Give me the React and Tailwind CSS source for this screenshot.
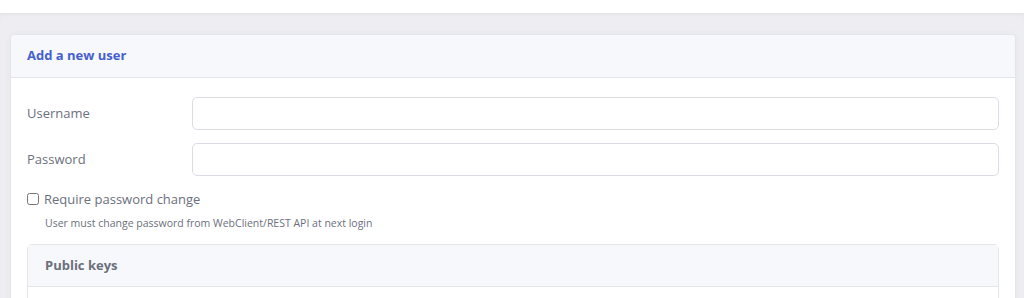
import React from 'react';

function Field({ label, type = 'text' }) {
  return (
    <div className="flex items-center">
      <label className="w-[165px] shrink-0 text-[13px] text-[#6c6f7d]">{label}</label>
      <input
        type={type}
        className="h-[33px] flex-1 rounded-[5px] border border-[#dcdce6] bg-white px-3 text-[13px] outline-none"
      />
    </div>
  );
}

export default function App() {
  return (
    <div className="min-h-screen bg-white font-['Open_Sans',sans-serif]">
      {/* top bar */}
      <div className="h-[13px] bg-white" />

      <main className="bg-[#eeeef2] pl-[10px] pr-[8px] pt-[21px] shadow-[inset_0_3px_4px_-2px_rgba(0,0,0,0.06)]">
        <section className="rounded-t-[5px] border border-b-0 border-[#e4e5ec] bg-white shadow-[0_0_6px_rgba(0,0,0,0.04)]">
          <header className="flex h-[43px] items-center rounded-t-[5px] border-b border-[#e4e5ec] bg-[#f7f8fc] px-[16px]">
            <h2 className="text-[13px] font-bold text-[#4460cf]">Add a new user</h2>
          </header>

          <div className="px-[16px] pt-[19px] pb-4">
            <div className="flex flex-col gap-[13px]">
              <Field label="Username" />
              <Field label="Password" type="password" />
            </div>

            <div className="mt-[13px]">
              <label className="flex items-center gap-[5px] text-[13px] leading-[20px] text-[#6c6f7d]">
                <input type="checkbox" className="h-[12px] w-[12px] accent-[#4460cf]" />
                Require password change
              </label>
              <p className="mt-[6px] pl-[18px] text-[10.5px] leading-[16px] text-[#6c6f7d]">
                User must change password from WebClient/REST API at next login
              </p>
            </div>

            <div className="mt-[13px] rounded-t-[5px] border border-[#e4e5ec] bg-white">
              <div className="flex h-[42px] items-center border-b border-[#e4e5ec] bg-[#f7f8fc] px-[17px]">
                <h3 className="text-[13px] font-bold text-[#6c6f7d]">Public keys</h3>
              </div>
              <div className="h-[40px]" />
            </div>
          </div>
        </section>
      </main>
    </div>
  );
}
